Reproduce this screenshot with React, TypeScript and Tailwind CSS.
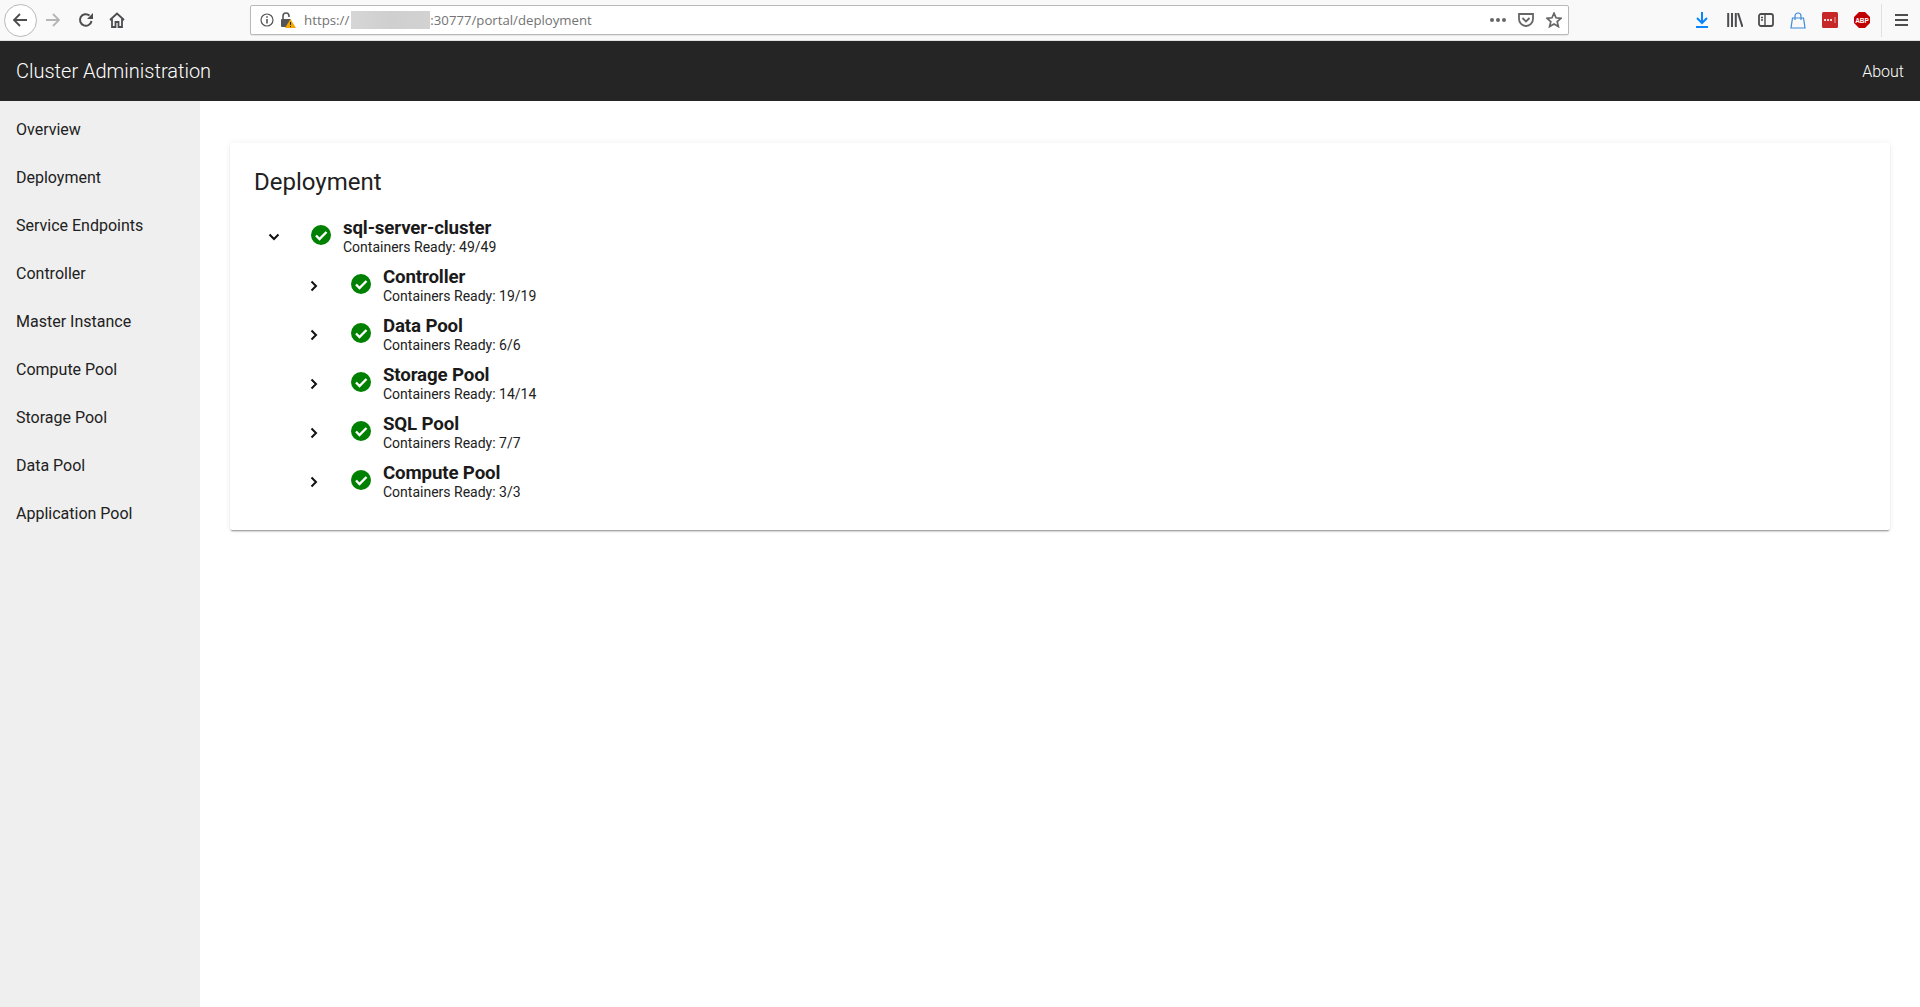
import React from 'react';

const navItems = [
  'Overview',
  'Deployment',
  'Service Endpoints',
  'Controller',
  'Master Instance',
  'Compute Pool',
  'Storage Pool',
  'Data Pool',
  'Application Pool',
];

const pools = [
  { name: 'Controller', ready: '19/19' },
  { name: 'Data Pool', ready: '6/6' },
  { name: 'Storage Pool', ready: '14/14' },
  { name: 'SQL Pool', ready: '7/7' },
  { name: 'Compute Pool', ready: '3/3' },
];

const CheckIcon = () => (
  <svg width="20" height="20" viewBox="0 0 20 20" className="shrink-0">
    <circle cx="10" cy="10" r="10" fill="#008000" />
    <path d="M5 10.5 L8.5 14 L15.5 7" fill="none" stroke="#fff" strokeWidth="2.4" />
  </svg>
);

const Chevron = ({ open }: { open?: boolean }) => (
  <svg width="12" height="12" viewBox="0 0 12 12" className="shrink-0">
    <path
      d={open ? 'M1.5 3.5 L6 8 L10.5 3.5' : 'M3.5 1.5 L8 6 L3.5 10.5'}
      fill="none"
      stroke="#111"
      strokeWidth="2"
    />
  </svg>
);

const TreeRow = ({ name, ready, open, child }: { name: string; ready: string; open?: boolean; child?: boolean }) => (
  <div className={child ? 'flex h-[49px] items-center pl-[40px]' : 'flex h-[49px] items-center'}>
    <div className="flex w-[39px] justify-center pt-[4px]">
      <Chevron open={open} />
    </div>
    <div className="flex w-[50px] justify-center pl-[5px]">
      <CheckIcon />
    </div>
    <div className="flex flex-col pt-[3px]">
      <span className="text-[18.72px] leading-[22px] font-bold tracking-[-0.15px] text-[#1a1a1a]">{name}</span>
      <span className="text-[14px] leading-[17px] text-[#212121]">Containers Ready: {ready}</span>
    </div>
  </div>
);

const BrowserBar = () => (
  <div className="flex h-[41px] items-center border-b border-[#e0e0e1] bg-[#f9f9fa]">
    {/* Nav buttons */}
    <div className="flex w-[250px] shrink-0 items-center">
      <div className="ml-[4px] flex h-[33px] w-[33px] items-center justify-center rounded-full border border-[#b8b8b8] bg-white">
        <svg width="16" height="16" viewBox="0 0 16 16" className="-ml-[1px]">
          <path d="M15 8 H2 M8 2 L2 8 L8 14" fill="none" stroke="#4d4d4f" strokeWidth="1.8" />
        </svg>
      </div>
      <svg width="16" height="16" viewBox="0 0 16 16" className="ml-[8px]">
        <path d="M1 8 H14 M8 2 L14 8 L8 14" fill="none" stroke="#b5b5b6" strokeWidth="1.8" />
      </svg>
      <svg width="16" height="16" viewBox="0 0 16 16" className="ml-[17px]">
        <path d="M13.5 9 A5.8 5.8 0 1 1 11.5 3.5" fill="none" stroke="#4d4d4f" strokeWidth="2" />
        <path d="M15 1 V7 H9 Z" fill="#4d4d4f" />
      </svg>
      <svg width="16" height="16" viewBox="0 0 16 16" className="ml-[15px]">
        <path d="M1 8 L8 1.5 L15 8 M3 7 V15 H6.5 V10 H9.5 V15 H13 V7" fill="none" stroke="#4d4d4f" strokeWidth="1.8" />
      </svg>
    </div>

    {/* URL box */}
    <div className="flex h-[30px] w-[1319px] shrink-0 items-center rounded-[2px] border border-[#b9b9b9] bg-white shadow-[0_1px_1px_rgba(0,0,0,0.08)]">
      <svg width="14" height="14" viewBox="0 0 14 14" className="ml-[9px]">
        <circle cx="7" cy="7" r="6" fill="none" stroke="#555" strokeWidth="1.2" />
        <path d="M7 6 V10.5 M7 3.2 V4.8" stroke="#555" strokeWidth="1.6" />
      </svg>
      <svg width="16" height="16" viewBox="0 0 16 16" className="ml-[6px]">
        <path d="M3 8 V4 A3 3 0 0 1 9 4 V5" fill="none" stroke="#555" strokeWidth="1.6" />
        <rect x="1" y="7" width="10" height="8" rx="1" fill="#555" />
        <path d="M10.5 7 L16 16 H5 Z" fill="#f5a800" />
        <path d="M10.5 10 V13 M10.5 14 V15" stroke="#222" strokeWidth="1" />
      </svg>
      <span className="ml-[8px] pt-[2px] font-['Open_Sans',sans-serif] text-[13.3px] text-[#737373]">https://</span>
      <div className="ml-[2px] h-[18px] w-[79px] bg-gradient-to-r from-[#d6d6d6] via-[#cfcfcf] to-[#d2d2d2]" />
      <span className="pt-[2px] font-['Open_Sans',sans-serif] text-[13.2px] text-[#737373]">:30777/portal/deployment</span>
      <div className="ml-auto flex items-center">
        <span className="flex gap-[2px]">
          <span className="h-[4px] w-[4px] rounded-full bg-[#666]" />
          <span className="h-[4px] w-[4px] rounded-full bg-[#666]" />
          <span className="h-[4px] w-[4px] rounded-full bg-[#666]" />
        </span>
        <svg width="16" height="16" viewBox="0 0 16 16" className="ml-[12px]">
          <path d="M1 2 H15 V7 A7 7 0 0 1 1 7 Z" fill="none" stroke="#666" strokeWidth="1.8" />
          <path d="M4.5 6 L8 9.5 L11.5 6" fill="none" stroke="#666" strokeWidth="1.8" />
        </svg>
        <svg width="16" height="16" viewBox="0 0 16 16" className="ml-[12px] mr-[6px]">
          <path d="M8 1.2 L10 5.8 L15 6.3 L11.2 9.6 L12.4 14.6 L8 12 L3.6 14.6 L4.8 9.6 L1 6.3 L6 5.8 Z" fill="none" stroke="#666" strokeWidth="1.7" />
        </svg>
      </div>
    </div>

    {/* Toolbar icons */}
    <div className="flex flex-1 items-center pl-[126px]">
      <svg width="14" height="16" viewBox="0 0 14 16">
        <path d="M7 0 V11 M2 6 L7 11 L12 6" fill="none" stroke="#0a84ff" strokeWidth="2" />
        <path d="M1 15 H13" stroke="#0a84ff" strokeWidth="2" />
      </svg>
      <svg width="16" height="14" viewBox="0 0 16 14" className="ml-[18px]">
        <path d="M1.2 0 V14 M5 0 V14 M8.8 0 V14 M11 0 L15.5 14" fill="none" stroke="#4d4d4f" strokeWidth="2" />
      </svg>
      <svg width="16" height="14" viewBox="0 0 16 14" className="ml-[15px]">
        <rect x="1" y="1" width="14" height="12" rx="2" fill="none" stroke="#4d4d4f" strokeWidth="1.8" />
        <path d="M7 1 V13 M3 4.5 H5 M3 7 H5" stroke="#4d4d4f" strokeWidth="1.4" />
      </svg>
      <svg width="16" height="17" viewBox="0 0 16 17" className="ml-[16px]">
        <path d="M2.5 6 H13.5 L15 16 H1 Z" fill="none" stroke="#3f8ad8" strokeWidth="1.2" />
        <path d="M5 8 V4 A3 3 0 0 1 11 4 V8" fill="none" stroke="#3f8ad8" strokeWidth="1.2" />
      </svg>
      <svg width="16" height="16" viewBox="0 0 16 16" className="ml-[16px]">
        <rect width="16" height="16" rx="1.5" fill="#c62828" />
        <path d="M3 8 H3.1 M6 8 H6.1 M9 8 H9.1" stroke="#fff" strokeWidth="2" strokeLinecap="round" />
        <path d="M13 5 V11" stroke="#e8a8a8" strokeWidth="1" />
      </svg>
      <svg width="16" height="16" viewBox="0 0 16 16" className="ml-[16px]">
        <path d="M5 0 H11 L16 5 V11 L11 16 H5 L0 11 V5 Z" fill="#c00000" />
        <text x="8" y="10.5" textAnchor="middle" fontSize="6.5" fontWeight="700" fill="#fff" fontFamily="Liberation Sans, sans-serif">ABP</text>
      </svg>
      <div className="ml-[11px] h-[33px] w-px bg-[#e0e0e1]" />
      <svg width="13" height="12" viewBox="0 0 13 12" className="ml-[13px]">
        <path d="M0 1 H13 M0 6 H13 M0 11 H13" stroke="#4d4d4f" strokeWidth="2" />
      </svg>
    </div>
  </div>
);

export default function App() {
  return (
    <div className="flex h-[1007px] flex-col overflow-hidden bg-white font-['Roboto',sans-serif]">
      <BrowserBar />

      <header className="flex h-[60px] shrink-0 items-center justify-between bg-[#252525] px-4 text-white">
        <span className="text-[20px] font-light">Cluster Administration</span>
        <span className="pt-[1px] text-[16px] font-light">About</span>
      </header>

      <div className="flex flex-1">
        {/* Sidebar */}
        <nav className="flex w-[200px] shrink-0 flex-col bg-[#efefef] pt-[5px]">
          {navItems.map((item) => (
            <div key={item} className="flex h-[48px] items-center px-4 text-[16px] text-[#212121]">
              {item}
            </div>
          ))}
        </nav>

        {/* Main content */}
        <main className="flex-1 pt-[42px] pl-[30px] pr-[30px]">
          <section className="rounded-[2px] bg-white pb-[26px] pt-[23px] pl-[24px] shadow-[0_2px_2px_-1px_rgba(0,0,0,0.45),0_0_6px_rgba(0,0,0,0.07)]">
            <h2 className="mb-[12px] text-[24px] leading-[32px] text-[#212121]">Deployment</h2>
            <TreeRow name="sql-server-cluster" ready="49/49" open />
            {pools.map((pool) => (
              <TreeRow key={pool.name} name={pool.name} ready={pool.ready} child />
            ))}
          </section>
        </main>
      </div>
    </div>
  );
}
